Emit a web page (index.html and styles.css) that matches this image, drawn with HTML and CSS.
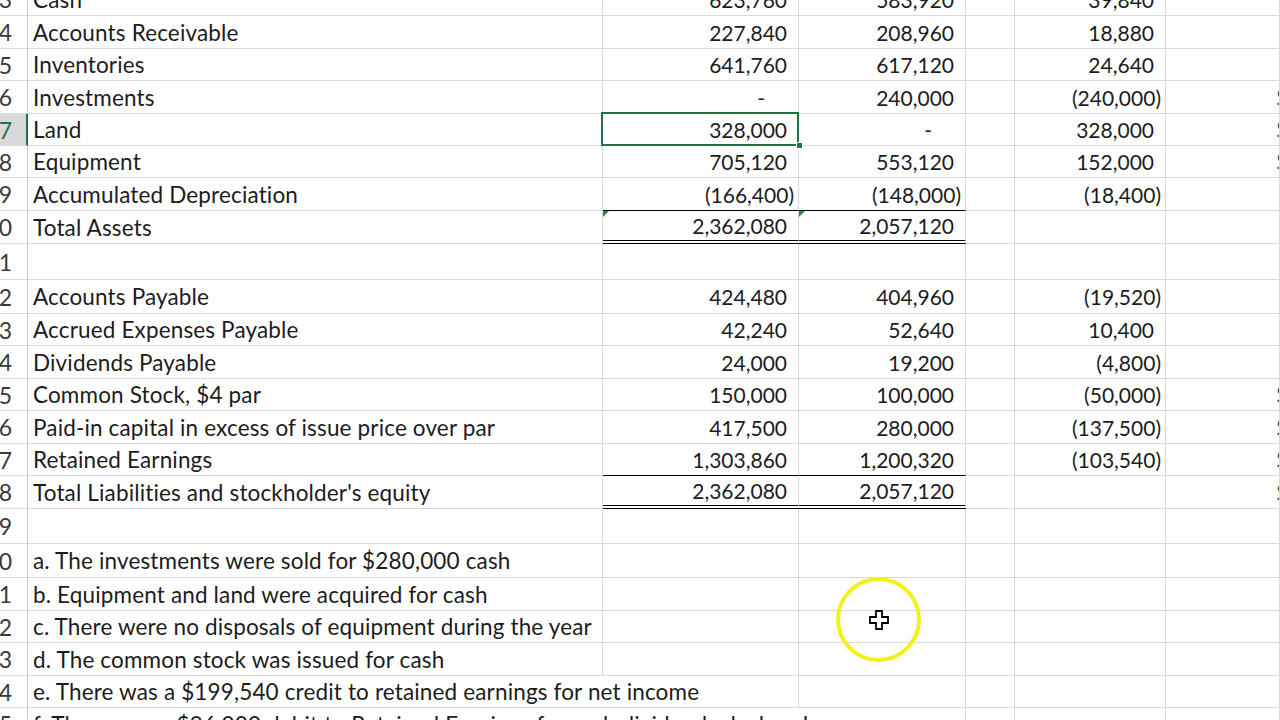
FILE: index.html
```html
<!DOCTYPE html>
<html>
<head>
<meta charset="utf-8">
<link rel="stylesheet" href="styles.css">
</head>
<body>
<div class="viewport">
  <div class="sheet">
    <div class="row h33"><div class="rh"><span>3</span></div><div class="c txt">Cash</div><div class="c num pos">623,760</div><div class="c num pos">583,920</div><div class="c"></div><div class="c num pos">39,840</div><div class="c"></div></div>
    <div class="row h33"><div class="rh"><span>4</span></div><div class="c txt">Accounts Receivable</div><div class="c num pos">227,840</div><div class="c num pos">208,960</div><div class="c"></div><div class="c num pos">18,880</div><div class="c"></div></div>
    <div class="row h32"><div class="rh"><span>5</span></div><div class="c txt">Inventories</div><div class="c num pos">641,760</div><div class="c num pos">617,120</div><div class="c"></div><div class="c num pos">24,640</div><div class="c"></div></div>
    <div class="row h33"><div class="rh"><span>6</span></div><div class="c txt">Investments</div><div class="c num dash">-</div><div class="c num pos">240,000</div><div class="c"></div><div class="c num">(240,000)</div><div class="c edge">$</div></div>
    <div class="row h32"><div class="rh active"><span>7</span></div><div class="c txt">Land</div><div class="c num pos sel">328,000<i class="handle"></i></div><div class="c num dash">-</div><div class="c"></div><div class="c num pos">328,000</div><div class="c edge">$</div></div>
    <div class="row h32"><div class="rh"><span>8</span></div><div class="c txt">Equipment</div><div class="c num pos">705,120</div><div class="c num pos">553,120</div><div class="c"></div><div class="c num pos">152,000</div><div class="c edge">$</div></div>
    <div class="row h33"><div class="rh"><span>9</span></div><div class="c txt">Accumulated Depreciation</div><div class="c num bb">(166,400)</div><div class="c num bb">(148,000)</div><div class="c"></div><div class="c num">(18,400)</div><div class="c"></div></div>
    <div class="row h33"><div class="rh"><span>10</span></div><div class="c txt">Total Assets</div><div class="c num pos dbl tri">2,362,080</div><div class="c num pos dbl tri">2,057,120</div><div class="c"></div><div class="c"></div><div class="c"></div></div>
    <div class="row h36"><div class="rh"><span>11</span></div><div class="c txt"></div><div class="c"></div><div class="c"></div><div class="c"></div><div class="c"></div><div class="c"></div></div>
    <div class="row h34"><div class="rh"><span>12</span></div><div class="c txt">Accounts Payable</div><div class="c num pos">424,480</div><div class="c num pos">404,960</div><div class="c"></div><div class="c num">(19,520)</div><div class="c"></div></div>
    <div class="row h32"><div class="rh"><span>13</span></div><div class="c txt">Accrued Expenses Payable</div><div class="c num pos">42,240</div><div class="c num pos">52,640</div><div class="c"></div><div class="c num pos">10,400</div><div class="c"></div></div>
    <div class="row h33"><div class="rh"><span>14</span></div><div class="c txt">Dividends Payable</div><div class="c num pos">24,000</div><div class="c num pos">19,200</div><div class="c"></div><div class="c num">(4,800)</div><div class="c"></div></div>
    <div class="row h32"><div class="rh"><span>15</span></div><div class="c txt">Common Stock, $4 par</div><div class="c num pos">150,000</div><div class="c num pos">100,000</div><div class="c"></div><div class="c num">(50,000)</div><div class="c edge">$</div></div>
    <div class="row h33"><div class="rh"><span>16</span></div><div class="c txt">Paid-in capital in excess of issue price over par</div><div class="c num pos">417,500</div><div class="c num pos">280,000</div><div class="c"></div><div class="c num">(137,500)</div><div class="c edge">$</div></div>
    <div class="row h32"><div class="rh"><span>17</span></div><div class="c txt">Retained Earnings</div><div class="c num pos bb">1,303,860</div><div class="c num pos bb">1,200,320</div><div class="c"></div><div class="c num">(103,540)</div><div class="c edge">$</div></div>
    <div class="row h33"><div class="rh"><span>18</span></div><div class="c txt">Total Liabilities and stockholder's equity</div><div class="c num pos dbl">2,362,080</div><div class="c num pos dbl">2,057,120</div><div class="c"></div><div class="c"></div><div class="c edge">$</div></div>
    <div class="row h35"><div class="rh"><span>19</span></div><div class="c txt"></div><div class="c"></div><div class="c"></div><div class="c"></div><div class="c"></div><div class="c"></div></div>
    <div class="row h34"><div class="rh"><span>20</span></div><div class="c txt">a. The investments were sold for $280,000 cash</div><div class="c"></div><div class="c"></div><div class="c"></div><div class="c"></div><div class="c"></div></div>
    <div class="row h33"><div class="rh"><span>21</span></div><div class="c txt">b. Equipment and land were acquired for cash</div><div class="c"></div><div class="c"></div><div class="c"></div><div class="c"></div><div class="c"></div></div>
    <div class="row h32"><div class="rh"><span>22</span></div><div class="c txt">c. There were no disposals of equipment during the year</div><div class="c"></div><div class="c"></div><div class="c"></div><div class="c"></div><div class="c"></div></div>
    <div class="row h33"><div class="rh"><span>23</span></div><div class="c txt">d. The common stock was issued for cash</div><div class="c"></div><div class="c"></div><div class="c"></div><div class="c"></div><div class="c"></div></div>
    <div class="row h32"><div class="rh"><span>24</span></div><div class="c txt span2">e. There was a $199,540 credit to retained earnings for net income</div><div class="c"></div><div class="c"></div><div class="c"></div><div class="c"></div></div>
    <div class="row h33"><div class="rh"><span>25</span></div><div class="c txt span3">f. There was a $96,000 debit to Retained Earnings for cash dividends declared</div><div class="c"></div><div class="c"></div><div class="c"></div></div>
  </div>
  <div class="spot">
    <svg class="cursor" width="22" height="22" viewBox="0 0 22 22"><path d="M8 2h6v6h6v6h-6v6H8v-6H2V8h6z" fill="#fff" stroke="#000" stroke-width="1.8" stroke-linejoin="miter"/></svg>
  </div>
</div>
</body>
</html>
```
FILE: styles.css
```css
* { box-sizing: border-box; }
html, body { margin: 0; padding: 0; background: #fff; }
body { font-family: Lato, "Liberation Sans", sans-serif; color: #1c1c1c; }
.viewport { position: relative; width: 1280px; height: 720px; overflow: hidden; }
.sheet { margin-top: -17px; }
.row {
  display: grid;
  grid-template-columns: 28px 575px 196px 167px 49px 151px 1fr;
  font-size: 22.5px;
  letter-spacing: 0.15px;
}
.h32 { height: 32px; }
.h33 { height: 33px; }
.h34 { height: 34px; }
.h35 { height: 35px; }
.h36 { height: 36px; }
.rh {
  display: flex;
  align-items: center;
  justify-content: flex-end;
  overflow: hidden;
  padding-right: 15px;
  border-right: 1px solid #c9c9c9;
  border-bottom: 1px solid #dcdcdc;
  color: #3a3a3a;
  white-space: nowrap;
  font-size: 23px;
  letter-spacing: 0;
}
.rh.active {
  background: #d9d9d9;
  color: #217346;
  border-right: 2px solid #217346;
  padding-right: 14px;
}
.c {
  display: flex;
  align-items: center;
  border-right: 1px solid #d9d9d9;
  border-bottom: 1px solid #d9d9d9;
  white-space: nowrap;
  min-width: 0;
}
.txt { padding-left: 5px; overflow: visible; }
.span2 { grid-column: span 2; }
.span3 { grid-column: span 3; }
.num { justify-content: flex-end; padding-right: 4px; font-size: 21px; letter-spacing: 0; }
.num.pos { padding-right: 11px; }
.num.dash { padding-right: 33px; }
.bb { border-bottom: 1px solid #000; }
.dbl { border-bottom: 4px double #000; }
.edge { padding-left: 110px; overflow: hidden; color: #444; }
.sel { position: relative; }
.sel::after {
  content: "";
  position: absolute;
  left: -2px; top: -2px; right: -1px; bottom: -1px;
  border: 2px solid #217346;
}
.handle {
  position: absolute;
  right: -5px; bottom: -4px;
  width: 7px; height: 7px;
  background: #217346;
  border: 1px solid #fff;
  z-index: 2;
}
.tri { position: relative; }
.tri::before {
  content: "";
  position: absolute;
  left: 0; top: 0;
  border-top: 6px solid #2a8a3a;
  border-right: 6px solid transparent;
}
.spot {
  position: absolute;
  left: 836px; top: 577px;
  width: 85px; height: 85px;
  border: 4px solid #f2f21a;
  border-radius: 50%;
  display: flex; align-items: center; justify-content: center;
}
.cursor { display: block; }
```
